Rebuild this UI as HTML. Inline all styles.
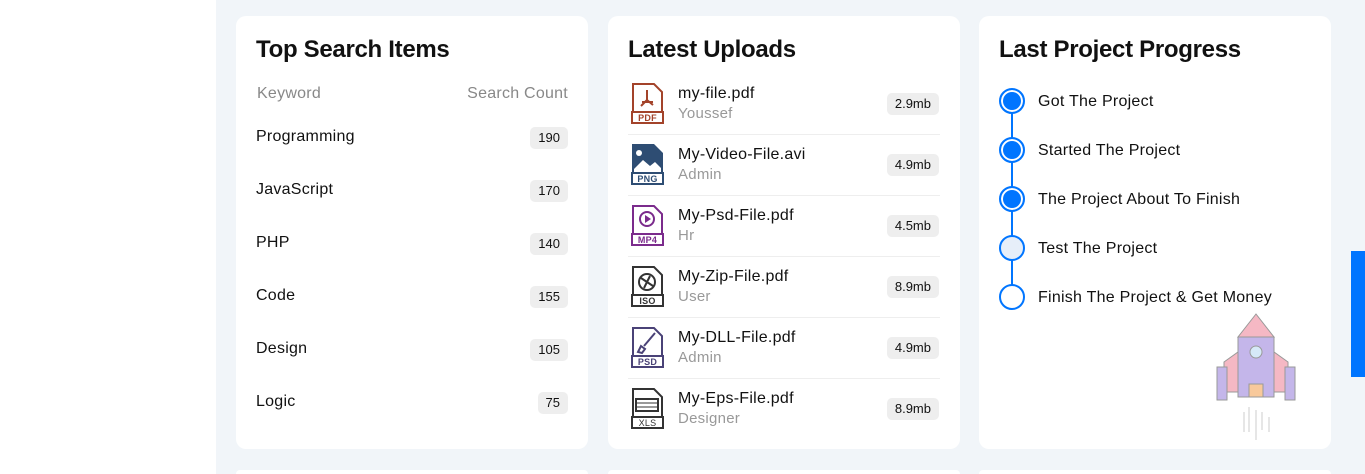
<!DOCTYPE html>
<html><head><style>
*{margin:0;padding:0;box-sizing:border-box}
html,body{width:1365px;height:474px;overflow:hidden}
body{background:#f1f5f9;font-family:"Liberation Sans",sans-serif;position:relative;color:#111;letter-spacing:0.25px}
.side{position:absolute;left:0;top:0;width:216px;height:474px;background:#fff}
.card{position:absolute;top:16px;width:352px;height:433px;background:#fff;border-radius:10px}
.card2{position:absolute;top:470px;width:352px;height:4px;background:#fff;border-radius:10px 10px 0 0}
h2{position:absolute;left:20px;top:20px;font-size:24px;font-weight:bold;color:#111;letter-spacing:-0.3px}
.hd{position:absolute;top:69px;font-size:16px;color:#888}
.row{position:absolute;left:20px;right:20px;height:24px;font-size:16px;line-height:24px}
.badge{position:absolute;right:0;background:#eee;border-radius:5px;font-size:13px;padding:0 8px;height:22px;line-height:22px;top:2px;letter-spacing:0}
.up{position:absolute;left:20px;right:20px;height:61px;border-bottom:1px solid #eee}
.up svg{position:absolute;left:3px;top:8px}
.up .n{position:absolute;left:50px;top:10px;font-size:16px;line-height:20px}
.up .a{position:absolute;left:50px;top:30px;font-size:15px;color:#999;line-height:20px}
.up .badge{top:19px;right:1px}
.st{position:absolute;left:20px;height:26px;font-size:16px;line-height:26px}
.dot{position:absolute;left:0;top:0;width:26px;height:26px;border-radius:50%;border:2px solid #0075ff;background:#0075ff;box-shadow:inset 0 0 0 2px #fff}
.st span{position:absolute;left:39px;top:1px;white-space:nowrap}
</style></head><body>
<div class="side"></div>
<div class="card" style="left:236px">
<h2>Top Search Items</h2>
<div class="hd" style="left:21px">Keyword</div><div class="hd" style="right:20px">Search Count</div>
<div class="row" style="top:109px">Programming<span class="badge">190</span></div>
<div class="row" style="top:162px">JavaScript<span class="badge">170</span></div>
<div class="row" style="top:215px">PHP<span class="badge">140</span></div>
<div class="row" style="top:268px">Code<span class="badge">155</span></div>
<div class="row" style="top:321px">Design<span class="badge">105</span></div>
<div class="row" style="top:374px">Logic<span class="badge">75</span></div>
</div>
<div class="card" style="left:608px">
<h2>Latest Uploads</h2>
<div class="up" style="top:58px"><svg width="33" height="42"><path d="M2 2h21l8 8v20H2z" fill="none" stroke="#a3432a" stroke-width="2"/><rect x="1" y="30" width="31" height="11" fill="none" stroke="#a3432a" stroke-width="2"/><text x="16.5" y="39" font-size="9" font-weight="bold" fill="#a3432a" text-anchor="middle" font-family="Liberation Sans">PDF</text><path d="M16 8v10l-6 6M16 18l6 5M11 20h11" stroke="#a3432a" stroke-width="2" fill="none"/></svg><div class="n">my-file.pdf</div><div class="a">Youssef</div><span class="badge">2.9mb</span></div>
<div class="up" style="top:119px"><svg width="33" height="42"><path d="M1 1h22l9 9v21H1z" fill="#2e4d73"/><path d="M3 26l9-9 7 6 5-4 6 6v4H3z" fill="#fff"/><circle cx="8" cy="10" r="3" fill="#fff"/><rect x="1" y="30" width="31" height="11" fill="#fff" stroke="#2e4d73" stroke-width="2"/><text x="16.5" y="39" font-size="9" font-weight="bold" fill="#2e4d73" text-anchor="middle" font-family="Liberation Sans">PNG</text></svg><div class="n">My-Video-File.avi</div><div class="a">Admin</div><span class="badge">4.9mb</span></div>
<div class="up" style="top:180px"><svg width="33" height="42"><path d="M2 2h21l8 8v20H2z" fill="none" stroke="#7b2b8c" stroke-width="2"/><circle cx="16" cy="15" r="7" fill="none" stroke="#7b2b8c" stroke-width="2"/><path d="M14 11v8l6-4z" fill="#7b2b8c"/><rect x="1" y="30" width="31" height="11" fill="none" stroke="#7b2b8c" stroke-width="2"/><text x="16.5" y="39" font-size="9" font-weight="bold" fill="#7b2b8c" text-anchor="middle" font-family="Liberation Sans">MP4</text></svg><div class="n">My-Psd-File.pdf</div><div class="a">Hr</div><span class="badge">4.5mb</span></div>
<div class="up" style="top:241px"><svg width="33" height="42"><path d="M2 2h21l8 8v20H2z" fill="none" stroke="#333" stroke-width="2"/><circle cx="16" cy="17" r="8" fill="none" stroke="#333" stroke-width="2"/><path d="M10 13l12 8M13 23l6-12" stroke="#333" stroke-width="2"/><rect x="1" y="30" width="31" height="11" fill="none" stroke="#333" stroke-width="2"/><text x="16.5" y="39" font-size="9" font-weight="bold" fill="#333" text-anchor="middle" font-family="Liberation Sans">ISO</text></svg><div class="n">My-Zip-File.pdf</div><div class="a">User</div><span class="badge">8.9mb</span></div>
<div class="up" style="top:302px"><svg width="33" height="42"><path d="M2 2h21l8 8v20H2z" fill="none" stroke="#4a4277" stroke-width="2"/><path d="M24 7L13 20M10 20l4 3-3 4-4-1z" stroke="#4a4277" stroke-width="2" fill="none"/><rect x="1" y="30" width="31" height="11" fill="none" stroke="#4a4277" stroke-width="2"/><text x="16.5" y="39" font-size="9" font-weight="bold" fill="#4a4277" text-anchor="middle" font-family="Liberation Sans">PSD</text></svg><div class="n">My-DLL-File.pdf</div><div class="a">Admin</div><span class="badge">4.9mb</span></div>
<div class="up" style="top:363px;border:none"><svg width="33" height="42"><path d="M2 2h21l8 8v20H2z" fill="none" stroke="#333" stroke-width="2"/><rect x="5" y="12" width="22" height="12" fill="none" stroke="#333" stroke-width="2"/><path d="M5 16h22M5 20h22" stroke="#333"/><rect x="1" y="30" width="31" height="11" fill="none" stroke="#333" stroke-width="2"/><text x="16.5" y="39" font-size="9" fill="#333" text-anchor="middle" font-family="Liberation Sans">XLS</text></svg><div class="n">My-Eps-File.pdf</div><div class="a">Designer</div><span class="badge">8.9mb</span></div>
</div>
<div class="card" style="left:979px">
<h2>Last Project Progress</h2>
<div style="position:absolute;left:32px;top:85px;width:2px;height:196px;background:#0075ff"></div>
<div class="st" style="top:72px"><div class="dot"></div><span>Got The Project</span></div>
<div class="st" style="top:121px"><div class="dot"></div><span>Started The Project</span></div>
<div class="st" style="top:170px"><div class="dot"></div><span>The Project About To Finish</span></div>
<div class="st" style="top:219px"><div class="dot" style="background:#e6eef9;box-shadow:none"></div><span>Test The Project</span></div>
<div class="st" style="top:268px"><div class="dot" style="background:#fff;box-shadow:none"></div><span>Finish The Project &amp; Get Money</span></div>
<svg style="position:absolute;left:235px;top:296px" width="90" height="135">
<path d="M42 2l18 23H24z" fill="#f5b8c4" stroke="#999"/>
<path d="M24 25h36v60H24z" fill="#c4b6ea" stroke="#999"/>
<path d="M10 50l14-10v40H10zM74 50l-14-10v40h14z" fill="#f5b8c4" stroke="#999"/>
<rect x="3" y="55" width="10" height="33" fill="#c4b6ea" stroke="#999"/><rect x="71" y="55" width="10" height="33" fill="#c4b6ea" stroke="#999"/>
<circle cx="42" cy="40" r="6" fill="#d6e9f8" stroke="#999"/>
<rect x="35" y="72" width="14" height="13" fill="#f8c99b" stroke="#999"/>
<path d="M30 100v20M35 95v25M42 98v30M48 100v18M55 105v15" stroke="#ccc"/>
</svg>
</div>
<div class="card2" style="left:236px"></div><div class="card2" style="left:608px"></div><div class="card2" style="left:979px"></div>
<div style="position:absolute;left:1351px;top:251px;width:14px;height:126px;background:#0075ff"></div>
</body></html>
